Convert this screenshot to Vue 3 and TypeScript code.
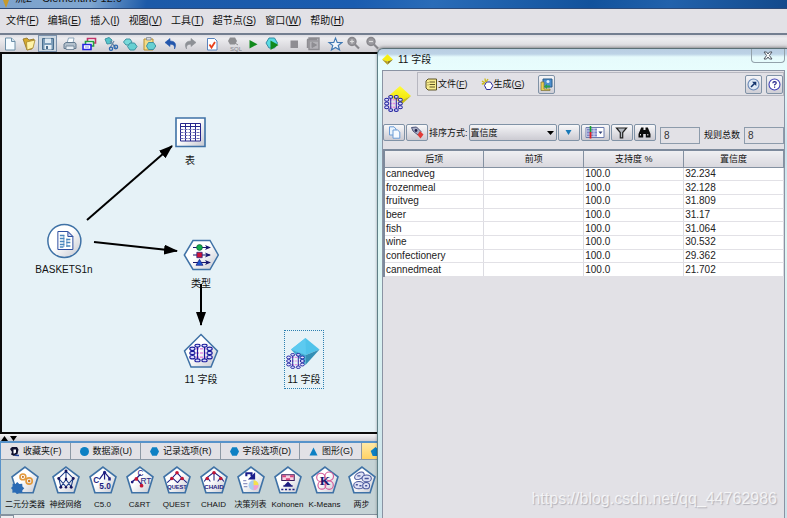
<script setup lang="ts">
import { ref } from 'vue'

interface MenuItem { label: string; key: string }
interface CanvasNode { id: string; label: string; icon: string; x: number; y: number; selected?: boolean }
interface Rule { consequent: string; antecedent: string; support: string; confidence: string }

const menus: MenuItem[] = [
  { label: '文件', key: 'F' },
  { label: '编辑', key: 'E' },
  { label: '插入', key: 'I' },
  { label: '视图', key: 'V' },
  { label: '工具', key: 'T' },
  { label: '超节点', key: 'S' },
  { label: '窗口', key: 'W' },
  { label: '帮助', key: 'H' },
]

const toolGroups: string[][] = [
  ['new', 'open', 'save'],
  ['print', 'styles'],
  ['cut', 'copy', 'paste'],
  ['undo', 'redo'],
  ['check'],
  ['sql', 'run', 'runsel'],
  ['stop', 'props'],
  ['star', 'zoomin', 'zoomout'],
]

const nodes: CanvasNode[] = [
  { id: 'table', label: '表', icon: 'n-table', x: 188, y: 60 },
  { id: 'source', label: 'BASKETS1n', icon: 'n-source', x: 62, y: 169 },
  { id: 'type', label: '类型', icon: 'n-type', x: 199, y: 183 },
  { id: 'model', label: '11 字段', icon: 'n-model', x: 199, y: 279 },
  { id: 'nugget', label: '11 字段', icon: 'n-nugget', x: 302, y: 279, selected: true },
]

const tabs = [
  { label: '收藏夹(F)', icon: 't-fav' },
  { label: '数据源(U)', icon: 't-circle' },
  { label: '记录选项(R)', icon: 't-hex' },
  { label: '字段选项(D)', icon: 't-hex' },
  { label: '图形(G)', icon: 't-tri' },
  { label: '建模(M)', icon: 't-pent' },
]
const activeTab = ref(5)

const palette = [
  { label: '二元分类器', icon: 'p-binary' },
  { label: '神经网络', icon: 'p-neural' },
  { label: 'C5.0', icon: 'p-c5' },
  { label: 'C&RT', icon: 'p-crt' },
  { label: 'QUEST', icon: 'p-quest' },
  { label: 'CHAID', icon: 'p-chaid' },
  { label: '决策列表', icon: 'p-list' },
  { label: 'Kohonen', icon: 'p-kohonen' },
  { label: 'K-Means', icon: 'p-kmeans' },
  { label: '两步', icon: 'p-twostep' },
]

const columns = ['后项', '前项', '支持度 %', '置信度']
const rules: Rule[] = [
  ['cannedveg', '32.234'],
  ['frozenmeal', '32.128'],
  ['fruitveg', '31.809'],
  ['beer', '31.17'],
  ['fish', '31.064'],
  ['wine', '30.532'],
  ['confectionery', '29.362'],
  ['cannedmeat', '21.702'],
].map(([consequent, confidence]) => ({ consequent, antecedent: '', support: '100.0', confidence }))

const sortBy = ref('置信度')
const shown = ref('8')
const total = ref('8')
</script>

<template>
  <div class="desktop">
    <svg class="defs" aria-hidden="true">
      <defs>
        <linearGradient id="g-face" x1="0" y1="0" x2="1" y2="1">
          <stop offset="0.45" stop-color="#ffffff" />
          <stop offset="1" stop-color="#c4c6cf" />
        </linearGradient>
        <linearGradient id="g-gem" x1="0" y1="0" x2="0" y2="1">
          <stop offset="0" stop-color="#fffb3a" />
          <stop offset="1" stop-color="#f0e400" />
        </linearGradient>
        <marker id="arrow" viewBox="0 0 14 10" refX="13" refY="5" markerWidth="14" markerHeight="10" markerUnits="userSpaceOnUse" orient="auto">
          <path d="M0 0 L14 5 L0 10 Z" fill="#000" />
        </marker>

        <symbol id="pent" viewBox="0 0 27 27">
          <path d="M13.5 1 L26 10.5 L21.3 25.8 H5.7 L1 10.5 Z" fill="url(#g-face)" stroke="#3f72a6" stroke-width="1.6" />
        </symbol>
        <symbol id="lattice" viewBox="0 0 24 18" preserveAspectRatio="none">
          <g fill="none" stroke="#e58fe0" stroke-width="1.4" stroke-dasharray="3 1">
            <path d="M7 5 H17 M7 9 H17 M7 13 H17" />
          </g>
          <g fill="#dfe0ff" stroke="#1c1c9c" stroke-width="1.1">
            <ellipse cx="8.5" cy="2" rx="2.6" ry="1.4" /><ellipse cx="15.5" cy="2" rx="2.6" ry="1.4" />
            <ellipse cx="8.5" cy="16" rx="2.6" ry="1.4" /><ellipse cx="15.5" cy="16" rx="2.6" ry="1.4" />
            <ellipse cx="3.4" cy="5" rx="2.6" ry="1.6" /><ellipse cx="20.6" cy="5" rx="2.6" ry="1.6" />
            <ellipse cx="3.4" cy="9" rx="2.6" ry="1.6" /><ellipse cx="20.6" cy="9" rx="2.6" ry="1.6" />
            <ellipse cx="3.4" cy="13" rx="2.6" ry="1.6" /><ellipse cx="20.6" cy="13" rx="2.6" ry="1.6" />
          </g>
          <path d="M8.5 3.4 V14.6 M15.5 3.4 V14.6" stroke="#1c1c9c" stroke-width="1.2" />
        </symbol>

        <!-- toolbar -->
        <symbol id="i-new" viewBox="0 0 16 16">
          <path d="M3.5 2 H9.5 L13 5.5 V14 H3.5 Z" fill="#f4fbff" stroke="#6c8fa8" />
          <path d="M9.5 2 V5.5 H13" fill="#d5e6ef" stroke="#6c8fa8" />
        </symbol>
        <symbol id="i-open" viewBox="0 0 16 16">
          <path d="M2 3 L6 2 L8 4 L13 3 L11 13 L6 14 Z" fill="#d6a92c" stroke="#8d7027" stroke-width="0.8" />
          <path d="M6 14 L5.5 6 L14 4 L12 12 Z" fill="#fff3a8" stroke="#a98a2c" stroke-width="0.8" />
        </symbol>
        <symbol id="i-save" viewBox="0 0 16 16">
          <path d="M2.5 2.5 H13.5 V13.5 H2.5 Z" fill="#7c9db9" stroke="#496d8d" />
          <path d="M5 2.5 H11 V7 H5 Z" fill="#dfeaf2" /><path d="M4.5 9 H11.5 V13.5 H4.5 Z" fill="#e8f0f5" />
          <path d="M6 10 H8 V13 H6 Z" fill="#496d8d" />
        </symbol>
        <symbol id="i-print" viewBox="0 0 16 16">
          <path d="M5 7 L6.5 2 H12 L11 7 Z" fill="#fafdff" stroke="#7a97b0" stroke-width="0.8" />
          <path d="M2 8 L4 6.5 H13 L14 8 V12.5 H2 Z" fill="#b3c1cd" stroke="#647b90" />
          <path d="M4 10 H12 V13.5 H4 Z" fill="#e8eef4" stroke="#647b90" stroke-width="0.8" />
        </symbol>
        <symbol id="i-styles" viewBox="0 0 16 16">
          <path d="M6.5 2.5 H14.5 V7 H6.5 Z" fill="#fff" stroke="#c0356a" stroke-width="1.6" />
          <path d="M4.5 5.5 H12.5 V10 H4.5 Z" fill="#fff" stroke="#23a043" stroke-width="1.6" />
          <path d="M2 8.5 H10 V13.5 H2 Z" fill="#fff" stroke="#2525e0" stroke-width="1.6" /><path d="M4 11 H8" stroke="#8b8bee" />
        </symbol>
        <symbol id="i-cut" viewBox="0 0 16 16">
          <path d="M2 3 L6 1.5 L9 4 L8 7.5 L4 8 Z" fill="#55c5cb" stroke="#3f93a2" />
          <path d="M7 5 L13 12 M11 5 L7 12" stroke="#6b8ba8" stroke-width="1.3" />
          <circle cx="12.8" cy="11" r="1.8" fill="none" stroke="#2d68b0" stroke-width="1.3" /><circle cx="8" cy="12.8" r="1.6" fill="none" stroke="#2d68b0" stroke-width="1.3" />
        </symbol>
        <symbol id="i-copy" viewBox="0 0 16 16">
          <path d="M1.5 6 L4 3 H8 L10 6 L8 9 H4 Z" fill="#79dada" stroke="#3f93a2" />
          <path d="M5.5 10.5 L8 7 H12.5 L15 10.5 L12.5 14 H8 Z" fill="#67d0d2" stroke="#3f93a2" />
        </symbol>
        <symbol id="i-paste" viewBox="0 0 16 16">
          <path d="M3 3 H12 V14 H3 Z" fill="#f4dc88" stroke="#b79032" /><path d="M5.5 1.5 H10 V4 H5.5 Z" fill="#d9dde2" stroke="#848b94" stroke-width="0.8" />
          <path d="M5.5 10 L7.5 6.5 H12.5 L14.8 10 L12.5 13.5 H7.5 Z" fill="#67d0d2" stroke="#3f93a2" />
        </symbol>
        <symbol id="i-undo" viewBox="0 0 16 16">
          <path d="M2 6.5 L7 2.5 V5 C12 5 14 8 11.5 13 C11.8 9 10 8.3 7 8.3 V10.5 Z" fill="#2457ac" stroke="#2457ac" stroke-width="0.6" />
        </symbol>
        <symbol id="i-redo" viewBox="0 0 16 16">
          <path d="M14 6.5 L9 2.5 V5 C4 5 2 8 4.5 13 C4.2 9 6 8.3 9 8.3 V10.5 Z" fill="#8d9095" stroke="#8d9095" stroke-width="0.6" />
        </symbol>
        <symbol id="i-check" viewBox="0 0 16 16">
          <path d="M3.5 2.5 H10.5 L13 5 V14 H3.5 Z" fill="#fff" stroke="#5a83bd" /><path d="M5.5 8.5 L7.5 11.5 L11 6" fill="none" stroke="#e8401c" stroke-width="1.8" />
        </symbol>
        <symbol id="i-sql" viewBox="0 0 16 16">
          <path d="M2 5 L4 1.5 H9 L11 5 L9 8.5 H4 Z" fill="#8e8e91" /><path d="M9 7 L12 9" stroke="#8e8e91" />
          <text x="4" y="15" font-size="6" font-family="Liberation Sans, sans-serif" fill="#85858a">SQL</text>
        </symbol>
        <symbol id="i-run" viewBox="0 0 16 16"><path d="M4.5 4 L12.5 8.3 L4.5 12.5 Z" fill="#118a1c" /></symbol>
        <symbol id="i-runsel" viewBox="0 0 16 16">
          <path d="M2 7 L5 2 H10.5 L13.5 7 L10.5 12 H5 Z" fill="#5adbe2" stroke="#368ba5" /><path d="M6.5 4.5 L14.5 9 L6.5 14 Z" fill="#118a1c" />
        </symbol>
        <symbol id="i-stop" viewBox="0 0 16 16"><path d="M4.5 4.5 H12 V12 H4.5 Z" fill="#8e8d92" /></symbol>
        <symbol id="i-props" viewBox="0 0 16 16">
          <path d="M2 3.5 H12 M4 2 H14 V13.5 H4 Z M2.5 3.5 V12" fill="#b3b2b7" stroke="#8e8d92" stroke-width="1.4" /><path d="M5 5 H13 M7 6.5 L11.5 9 L7 11.5 Z" stroke="#8e8d92" fill="#8e8d92" />
        </symbol>
        <symbol id="i-star" viewBox="0 0 16 16">
          <path d="M8.5 2 L10.2 6.4 L15 6.6 L11.2 9.5 L12.6 14 L8.5 11.5 L4.4 14 L5.8 9.5 L2 6.6 L6.8 6.4 Z" fill="#f1f7fc" stroke="#3e78b3" stroke-width="1.1" />
        </symbol>
        <symbol id="i-zoomin" viewBox="0 0 16 16">
          <circle cx="6" cy="5.5" r="4" fill="#9b9a9f" stroke="#88878c" stroke-width="1.4" /><path d="M4 5.5 H8 M6 3.5 V7.5" stroke="#ddd" stroke-width="1.2" /><path d="M9 8.5 L13 12.5" stroke="#88878c" stroke-width="2.2" />
        </symbol>
        <symbol id="i-zoomout" viewBox="0 0 16 16">
          <circle cx="6" cy="5.5" r="4" fill="#9b9a9f" stroke="#88878c" stroke-width="1.4" /><path d="M4 5.5 H8" stroke="#ddd" stroke-width="1.2" /><path d="M9 8.5 L13 12.5" stroke="#88878c" stroke-width="2.2" />
        </symbol>

        <!-- stream nodes -->
        <symbol id="n-table" viewBox="0 0 36 36">
          <path d="M4 4 H33 V32.5 H4 Z" fill="url(#g-face)" stroke="#3f72a6" stroke-width="1.6" />
          <path d="M8.5 9.5 H28.5 V27 H8.5 Z" fill="#fff" stroke="#26268c" stroke-width="1" />
          <path d="M8.5 12.5 H28.5 M13.5 9.5 V27 M18.5 9.5 V27 M23.5 9.5 V27" stroke="#26268c" stroke-width="1" />
          <path d="M8.5 15.5 H28 M8.5 18.5 H28 M8.5 21.5 H28 M8.5 24.5 H28" stroke="#6c6cb5" stroke-width="1" stroke-dasharray="3 1" />
        </symbol>
        <symbol id="n-source" viewBox="0 0 36 36">
          <circle cx="18" cy="18" r="16.5" fill="url(#g-face)" stroke="#3f72a6" stroke-width="1.5" />
          <path d="M11.5 8.5 H21.5 L26.5 13.5 V26.5 H11.5 Z" fill="#fff" stroke="#2f4fa0" /><path d="M21.5 8.5 V13.5 H26.5 Z" fill="#cfd7f2" stroke="#2f4fa0" />
          <path d="M13.5 12.5 H18 M13.5 15.5 H18 M13.5 18.5 H18 M13.5 21.5 H18 M13.5 24 H17 M20 16.5 H24 M20 19.5 H24 M20 23 H24" stroke="#4a86bd" stroke-width="1.3" />
          <path d="M17.5 12 V24 M20.5 15.5 V24" stroke="#4a86bd" stroke-width="0.8" />
        </symbol>
        <symbol id="n-type" viewBox="0 0 36 36">
          <path d="M10 3.5 H27 L35.3 18 L27 32.5 H10 L1.3 18 Z" fill="url(#g-face)" stroke="#3f72a6" stroke-width="1.5" />
          <path d="M10 10.5 H27 M10 18 H27 M10 25.5 H27" stroke="#17176e" stroke-width="1.2" />
          <path d="M22 8 L28 10.5 L22 13 L23.5 10.5 Z M22 15.5 L28 18 L22 20.5 L23.5 18 Z M22 23 L28 25.5 L22 28 L23.5 25.5 Z" fill="#17176e" />
          <circle cx="16.5" cy="10.5" r="2.9" fill="#12b04c" stroke="#14533a" stroke-width="0.7" />
          <path d="M13.8 15.3 H19.2 V20.7 H13.8 Z" fill="#cf1238" stroke="#1b1b7a" stroke-width="0.7" />
          <path d="M16.5 22.3 L20 28.3 H13 Z" fill="#1b55d0" stroke="#1b1b7a" stroke-width="0.7" />
        </symbol>
        <symbol id="n-model" viewBox="0 0 36 36">
          <path d="M18 1.5 L34.5 18 L28 34 H8 L1.5 18 Z" fill="url(#g-face)" stroke="#3f72a6" stroke-width="1.5" />
          <use href="#lattice" x="6" y="10.5" width="24" height="19" />
        </symbol>
        <symbol id="n-nugget" viewBox="0 0 36 36">
          <path d="M19.5 5 L33.5 16.5 L20 22 L5 16.5 Z" fill="#4fc3ea" /><path d="M19.5 5 L20 22 L5 16.5 Z" fill="#5ccaf0" />
          <path d="M5 16.5 L20 22 L19.5 32 Z" fill="#3fa8d0" /><path d="M33.5 16.5 L20 22 L19.5 32 Z" fill="#348fb5" />
          <use href="#lattice" x="0" y="20" width="19" height="16" />
        </symbol>

        <!-- palette tabs -->
        <symbol id="t-fav" viewBox="0 0 11 11">
          <path d="M1 3 L3 1 H8 L9.5 3.5 L8.5 8 L5 10 L2 8.5 L3 6 Z" fill="#10102e" /><path d="M4.5 3.5 H7 V6.5 L5.5 7.5 H4.5 Z" fill="#fff" /><path d="M6 9.3 L10 9.5" stroke="#1f3f94" stroke-width="1.5" />
        </symbol>
        <symbol id="t-circle" viewBox="0 0 11 11"><circle cx="5.5" cy="5.5" r="4.5" fill="#0d80c4" /></symbol>
        <symbol id="t-hex" viewBox="0 0 11 11"><path d="M3.2 1.3 H7.8 L10 5.5 L7.8 9.7 H3.2 L1 5.5 Z" fill="#0d80c4" /></symbol>
        <symbol id="t-tri" viewBox="0 0 11 11"><path d="M5.5 1.5 L9.5 9.5 H1.5 Z" fill="#0d80c4" /></symbol>
        <symbol id="t-pent" viewBox="0 0 11 11"><path d="M5.5 1 L10.3 5 L8.3 10 H2.7 L0.7 5 Z" fill="#0d80c4" /></symbol>

        <!-- palette nodes -->
        <symbol id="p-binary" viewBox="0 0 27 27">
          <use href="#pent" width="27" height="27" />
          <g fill="none" stroke="#e39a3c" stroke-width="1.6"><circle cx="11.5" cy="10.5" r="2.8" /><circle cx="17.5" cy="14.5" r="3" /></g>
          <circle cx="11.5" cy="10.5" r="1" fill="#c7782a" /><circle cx="17.5" cy="14.5" r="1.2" fill="#c7782a" />
          <path d="M6 15.5 L8 17.3 L10.8 17 L11 19.7 L12.8 21.5 L11 23.3 L10.8 26 L8 25.7 L6 27 L4 25.5 L1.3 25.8 L1.4 23 L0 21.3 L1.5 19.7 L1.5 17 L4.2 17.3 Z" fill="#2a6bb5" />
        </symbol>
        <symbol id="p-neural" viewBox="0 0 27 27">
          <use href="#pent" width="27" height="27" />
          <path d="M13.5 5 L6.5 12 L8.5 20 M13.5 5 L20.5 12 L18.5 20 M13.5 5 V13 M6.5 12 L13.5 20 L20.5 12 M13.5 13 L8.5 20 M13.5 13 L18.5 20" fill="none" stroke="#1d3f88" stroke-width="1" />
          <g fill="#15155f"><circle cx="13.5" cy="4.8" r="1.4" /><circle cx="6.5" cy="12" r="1.4" /><circle cx="20.5" cy="12" r="1.4" /><circle cx="13.5" cy="12.5" r="1.2" /><circle cx="8.5" cy="20.5" r="1.4" /><circle cx="18.5" cy="20.5" r="1.4" /><circle cx="13.5" cy="20.5" r="1.2" /></g>
        </symbol>
        <symbol id="p-c5" viewBox="0 0 27 27">
          <use href="#pent" width="27" height="27" />
          <path d="M10 13 L15 6 L20 12 M15 6 V13" fill="none" stroke="#1d1d80" stroke-width="1.2" /><circle cx="15" cy="6" r="1.5" fill="#1d1d80" /><path d="M18.5 11 H21 V14 H18.5 Z" fill="#1d1d80" />
          <text x="4" y="16" font-size="8" font-weight="bold" font-family="Liberation Sans, sans-serif" fill="#1d1d80">C</text><text x="10" y="22.5" font-size="8" font-weight="bold" font-family="Liberation Sans, sans-serif" fill="#1d1d80">5.0</text>
        </symbol>
        <symbol id="p-crt" viewBox="0 0 27 27">
          <use href="#pent" width="27" height="27" />
          <path d="M5 16 L10 12 L15 18 M10 12 L14 8" fill="none" stroke="#1d1d80" stroke-width="1.2" /><circle cx="10" cy="12.5" r="1.8" fill="#c41636" /><circle cx="15" cy="19" r="1.8" fill="#c41636" /><circle cx="6" cy="15.5" r="1.3" fill="#1d1d80" />
          <text x="11" y="10" font-size="8" font-family="Liberation Sans, sans-serif" fill="#1d1d80">C</text><text x="14" y="17" font-size="8" font-family="Liberation Sans, sans-serif" fill="#1d1d80">RT</text>
        </symbol>
        <symbol id="p-quest" viewBox="0 0 27 27">
          <use href="#pent" width="27" height="27" />
          <path d="M4 16 L9 11.5 L14 16 M9 11.5 L13.5 6.5 L18 11.5 M14 16 L18 11.5 L23 16" fill="none" stroke="#1d1d80" /><g fill="#c41636"><circle cx="13.5" cy="6.5" r="1.7" /><circle cx="8.5" cy="12" r="1.7" /><circle cx="18.5" cy="12" r="1.7" /></g>
          <text x="13.5" y="22" font-size="5.5" font-weight="bold" text-anchor="middle" font-family="Liberation Sans, sans-serif" fill="#1d1d80">QUEST</text>
        </symbol>
        <symbol id="p-chaid" viewBox="0 0 27 27">
          <use href="#pent" width="27" height="27" />
          <path d="M4 15 L7 11 L10 15 M7 11 L13.5 6 L20 11 M13.5 6 V14 M17 15 L20 11 L23 15" fill="none" stroke="#1d1d80" /><g fill="#c41636"><circle cx="13.5" cy="6.5" r="1.7" /><circle cx="7" cy="12" r="1.7" /><circle cx="20" cy="12" r="1.7" /></g>
          <text x="13.5" y="22" font-size="6" font-weight="bold" text-anchor="middle" font-family="Liberation Sans, sans-serif" fill="#1d1d80">CHAID</text>
        </symbol>
        <symbol id="p-list" viewBox="0 0 27 27">
          <use href="#pent" width="27" height="27" />
          <path d="M9 10 V7 H14 V10" fill="none" stroke="#1b1f8c" stroke-width="2" /><path d="M17.5 6 V13 H10.5 Z" fill="#1b1f8c" />
          <circle cx="16" cy="18.5" r="4.8" fill="#a9cdf0" /><path d="M16 18.5 V13.7 A4.8 4.8 0 0 1 20.8 18.5 Z" fill="#f7e04c" /><path d="M16 18.5 H20.8 A4.8 4.8 0 0 1 16 23.3 Z" fill="#f2a0cf" />
          <path d="M6 14 H9 M6 17 H10 M6.5 20 H10" stroke="#9096c4" stroke-width="1.2" />
        </symbol>
        <symbol id="p-kohonen" viewBox="0 0 27 27">
          <use href="#pent" width="27" height="27" />
          <path d="M7.5 8.5 H19.5 V14 H7.5 Z" fill="#f9d3e3" stroke="#3a1c5c" /><path d="M8 9.8 H11.5 M15.5 9.8 H19 M11.5 12.7 H15.5" stroke="#d8447e" stroke-width="2" />
          <path d="M13.5 15 L17 18.5 H10 Z M9 18.5 H18 V20 H9 Z" fill="#1d1d80" /><path d="M7 22.7 H20" stroke="#1d1d80" stroke-width="1.6" stroke-dasharray="2 1.6" />
        </symbol>
        <symbol id="p-kmeans" viewBox="0 0 27 27">
          <use href="#pent" width="27" height="27" />
          <g fill="none" stroke="#d65b9a" stroke-width="1.1"><circle cx="9.5" cy="11" r="4" /><circle cx="17.5" cy="10" r="4.2" /><circle cx="10.5" cy="18.5" r="3.8" /><circle cx="17.5" cy="18.5" r="4" /></g>
          <text x="8.5" y="18" font-size="13" font-weight="bold" font-family="Liberation Serif, serif" fill="#17176e">K</text>
        </symbol>
        <symbol id="p-twostep" viewBox="0 0 27 27">
          <use href="#pent" width="27" height="27" />
          <g fill="#dfe2f5" stroke="#47559c" stroke-width="1"><ellipse cx="11" cy="9.5" rx="5" ry="3" transform="rotate(-30 11 9.5)" /><ellipse cx="18" cy="12" rx="4.5" ry="3.3" /><ellipse cx="10.5" cy="18.5" rx="5" ry="3.5" /><ellipse cx="17.5" cy="19" rx="3.3" ry="3" /></g>
          <path d="M9 9.5 H12 M16 12 H20 M7.5 18 H9.5 M11 19 H13 M16.5 19 H18.5" stroke="#47559c" stroke-width="1.4" />
        </symbol>

        <!-- dialog -->
        <symbol id="d-gem" viewBox="0 0 11 11">
          <path d="M5.5 0.3 L10.9 5.5 L5.5 7.5 L0.1 5.5 Z" fill="#f7ee10" /><path d="M0.1 5.5 L5.5 7.5 V10.8 Z" fill="#b99f18" /><path d="M10.9 5.5 L5.5 7.5 V10.8 Z" fill="#8f7a12" />
        </symbol>
        <symbol id="d-model" viewBox="0 0 28 28">
          <path d="M16 1 L27 11 L14.5 16.5 L4.5 11 Z" fill="url(#g-gem)" /><path d="M27 11 L14.5 16.5 L17 20 Z" fill="#c9bf10" />
          <use href="#lattice" x="0" y="10" width="19" height="17" />
        </symbol>
        <symbol id="d-file" viewBox="0 0 13 13">
          <path d="M3 1 H11.5 V12 H3 L1 10 V3 Z" fill="#f8ec8e" stroke="#5e5426" /><path d="M4.5 4 H10 M4.5 6.5 H10 M4.5 9 H10 M3 4 V4.8 M3 6.5 V7.3" stroke="#5e5426" />
        </symbol>
        <symbol id="d-gen" viewBox="0 0 13 13">
          <path d="M3.5 7.5 L5.5 4 H9.5 L11.8 7.7 L9.5 11.5 H5.5 Z" fill="#fff" stroke="#2b2b9e" /><path d="M1 3 L4 5 M4 0.5 L4.5 4 M0.8 6 L3.5 5.5 M7 1 L5 4" stroke="#c9b715" stroke-width="1.3" />
        </symbol>
        <symbol id="d-pic" viewBox="0 0 13 13">
          <path d="M3 1 H12 V9 H3 Z" fill="#4c8fd0" stroke="#2b5c88" /><path d="M1 4 H4 V11 H10 V12.5 H1 Z" fill="#e9cf53" stroke="#7b7038" stroke-width="0.7" /><path d="M4 8.5 L7 6 V7.5 H10 V9.5 H7 V11 Z" fill="#2aa04b" /><circle cx="8" cy="3.5" r="1.5" fill="#e5f2fa" />
        </symbol>
        <symbol id="d-max" viewBox="0 0 13 13">
          <circle cx="6.5" cy="6.5" r="5.5" fill="#dfe9f5" stroke="#6886b5" stroke-width="1.1" /><path d="M4 9 L7.5 5.5" stroke="#15356d" stroke-width="1.6" /><path d="M5 3.7 H9.3 V8 Z" fill="#15356d" />
        </symbol>
        <symbol id="d-help" viewBox="0 0 13 13">
          <circle cx="6.5" cy="6.5" r="5.5" fill="#fff" stroke="#3f3fb4" stroke-width="1.1" /><path d="M4.8 5.2 Q4.9 3.6 6.6 3.6 Q8.3 3.7 8.2 5.1 Q8 6 6.6 6.8 V7.6 M6.6 8.6 V9.8" fill="none" stroke="#26268c" stroke-width="1.2" />
        </symbol>
        <symbol id="d-copy" viewBox="0 0 13 13">
          <path d="M1.5 0.8 H6 L8 3 V9 H1.5 Z" fill="#eaf3fc" stroke="#6a9bd6" /><path d="M5 4 H9.5 L11.8 6 V12.2 H5 Z" fill="#f6faff" stroke="#6a9bd6" />
        </symbol>
        <symbol id="d-tag" viewBox="0 0 13 13">
          <path d="M0.5 1.5 L5.5 1 L10 5.5 L7 9 L2 5 Z" fill="#a8aec6" stroke="#4e5478" /><path d="M9 5 L12.5 8.5 L9.5 12.5 L6.5 9 Z" fill="#e13a35" /><circle cx="5" cy="4.5" r="1.4" fill="#23234a" />
        </symbol>
        <symbol id="d-down" viewBox="0 0 13 13"><path d="M3.5 4 H9.5 L6.5 9 Z" fill="#1879b8" /></symbol>
        <symbol id="d-cols" viewBox="0 0 20 13">
          <path d="M1 1.5 H19 V11.5 H1 Z" fill="#fff" stroke="#6c7cae" /><path d="M2 2.5 H12 V10.5 H2 Z" fill="#7f86c8" /><path d="M2 5 H12 M2 8 H12 M9 2 V11" stroke="#dfe2f5" stroke-width="0.8" /><path d="M5.5 0 V6" stroke="#16a22e" stroke-width="1.6" /><path d="M5.5 6 V12.5" stroke="#e02020" stroke-width="1.8" /><path d="M13.5 5.5 H17.5 L15.5 8 Z" fill="#2c3d78" />
        </symbol>
        <symbol id="d-filter" viewBox="0 0 13 13"><path d="M1.5 2 H11.5 L7.7 6.5 V11.8 H5.3 V6.5 Z" fill="#b5bac2" stroke="#222" stroke-width="1.2" /></symbol>
        <symbol id="d-find" viewBox="0 0 13 13"><path d="M3.2 1.5 H5.5 V4 H7.5 V1.5 H9.8 L12.5 8 V11.5 H7.8 V8 H5.2 V11.5 H0.5 V8 Z" fill="#0c0c0c" /><path d="M2.5 8 V9.5 M9.8 8 V9.5" stroke="#fff" stroke-width="0.9" /></symbol>
      </defs>
    </svg>

    <main class="app">
      <header class="titlebar"><span class="app-logo"></span><span>流2 - Clementine 12.0</span></header>

      <nav class="menubar">
        <button v-for="m in menus" :key="m.key" type="button" class="menu">{{ m.label }}(<u>{{ m.key }}</u>)</button>
      </nav>

      <div class="toolbar">
        <div v-for="(group, g) in toolGroups" :key="g" class="tool-group">
          <button v-for="t in group" :key="t" type="button" class="tool" :class="{ pressed: t === 'save' }" :aria-label="t">
            <svg><use :href="'#i-' + t" /></svg>
          </button>
        </div>
      </div>

      <section class="canvas">
        <svg class="edges">
          <g stroke="#000" stroke-width="2">
            <line x1="85" y1="166" x2="170" y2="92" marker-end="url(#arrow)" />
            <line x1="92" y1="188" x2="175" y2="197" marker-end="url(#arrow)" />
            <line x1="199" y1="230" x2="199" y2="271" marker-end="url(#arrow)" />
          </g>
        </svg>
        <div v-for="n in nodes" :key="n.id" class="node" :class="{ selected: n.selected }" :style="{ left: n.x + 'px', top: n.y + 'px' }">
          <svg><use :href="'#' + n.icon" /></svg>
          <span>{{ n.label }}</span>
        </div>
      </section>

      <div class="sash">
        <svg viewBox="0 0 16 5"><path d="M0 5 L3.5 0 L7 5 Z M9 0 H16 L12.5 5 Z" fill="#000" /></svg>
      </div>

      <div class="tabs" role="tablist">
        <button v-for="(t, i) in tabs" :key="t.label" type="button" role="tab" class="tab" :class="{ active: i === activeTab }" :aria-selected="i === activeTab" @click="activeTab = i">
          <svg><use :href="'#' + t.icon" /></svg>{{ t.label }}
        </button>
      </div>

      <div class="palette">
        <button v-for="p in palette" :key="p.label" type="button" class="palette-node">
          <svg><use :href="'#' + p.icon" /></svg>
          <span>{{ p.label }}</span>
        </button>
      </div>
      <div class="scroll-strip"><span></span></div>
    </main>

    <section class="dialog" role="dialog" aria-labelledby="dialog-title">
      <header class="dialog-title">
        <svg><use href="#d-gem" /></svg>
        <h1 id="dialog-title">11 字段</h1>
        <button type="button" class="close" aria-label="关闭">
          <svg viewBox="0 0 10 9"><path d="M1 1 H3.5 L5 3 L6.5 1 H9 L6.4 4.5 L9 8 H6.5 L5 6 L3.5 8 H1 L3.6 4.5 Z" fill="#fff" stroke="#4d5560" stroke-width="1" /></svg>
        </button>
      </header>

      <div class="dialog-body">
        <div class="dialog-head">
          <svg class="model-icon"><use href="#d-model" /></svg>
          <div class="head-bar">
            <button type="button" class="flat"><svg><use href="#d-file" /></svg>文件(<u>F</u>)</button>
            <button type="button" class="flat"><svg><use href="#d-gen" /></svg>生成(<u>G</u>)</button>
            <button type="button" class="boxed" aria-label="预览"><svg><use href="#d-pic" /></svg></button>
            <span class="spacer"></span>
            <button type="button" class="boxed" aria-label="最大化"><svg><use href="#d-max" /></svg></button>
            <button type="button" class="boxed" aria-label="帮助"><svg><use href="#d-help" /></svg></button>
          </div>
        </div>

        <div class="controls">
          <button type="button" class="ctl" aria-label="复制"><svg><use href="#d-copy" /></svg></button>
          <button type="button" class="ctl" aria-label="标记"><svg><use href="#d-tag" /></svg></button>
          <label for="sort">排序方式:</label>
          <span class="select-wrap">
            <select id="sort" v-model="sortBy"><option>置信度</option></select>
            <svg viewBox="0 0 7 4"><path d="M0 0 H7 L3.5 4 Z" fill="#000" /></svg>
          </span>
          <button type="button" class="ctl" aria-label="降序"><svg><use href="#d-down" /></svg></button>
          <button type="button" class="ctl wide" aria-label="列"><svg><use href="#d-cols" /></svg></button>
          <button type="button" class="ctl" aria-label="过滤"><svg><use href="#d-filter" /></svg></button>
          <button type="button" class="ctl" aria-label="查找"><svg><use href="#d-find" /></svg></button>
          <input v-model="shown" class="count" aria-label="规则数" readonly />
          <label for="total" class="total-label">规则总数</label>
          <input id="total" v-model="total" class="count" readonly />
        </div>

        <table class="rules">
          <thead>
            <tr><th v-for="c in columns" :key="c" scope="col">{{ c }}</th></tr>
          </thead>
          <tbody>
            <tr v-for="r in rules" :key="r.consequent">
              <td>{{ r.consequent }}</td>
              <td>{{ r.antecedent }}</td>
              <td>{{ r.support }}</td>
              <td>{{ r.confidence }}</td>
            </tr>
          </tbody>
        </table>

        <p class="watermark">https://blog.csdn.net/qq_44762986</p>
      </div>
    </section>
  </div>
</template>

<style>
body {
  margin: 0;
  overflow: hidden;
}
</style>

<style scoped>
.desktop {
  position: relative;
  height: 100vh;
  overflow: hidden;
  font: 10px/12px "Liberation Sans", "Noto Sans CJK SC", sans-serif;
  color: #111;
}
.desktop * {
  box-sizing: border-box;
}
.defs {
  position: absolute;
  width: 0;
  height: 0;
}
svg {
  display: block;
  flex: none;
}
button {
  margin: 0;
  padding: 0;
  border: 0;
  background: none;
  font: inherit;
  color: inherit;
  white-space: nowrap;
}
.app {
  display: flex;
  flex-direction: column;
  height: 100%;
  background: #e2e1e6;
}

.titlebar {
  display: flex;
  align-items: flex-end;
  gap: 6px;
  height: 9px;
  flex: none;
  padding-left: 3px;
  overflow: hidden;
  border-bottom: 1px solid #2c4a78;
  background: linear-gradient(100deg, #7da2cc 0, #7fa6d0 90px, #1c5aa8 145px, #1a5cb0 45%, #2a6cb8 55%, #12529c 75%, #2262ac 85%, #134a8c 100%);
  font-size: 11px;
  line-height: 20px;
}
.app-logo {
  width: 6px;
  height: 8px;
  background: #c69a2c;
  clip-path: polygon(0 0, 100% 0, 50% 100%);
}

.menubar {
  display: flex;
  align-items: center;
  gap: 9px;
  height: 26px;
  flex: none;
  padding: 0 6px;
  border-bottom: 2px solid #737e90;
}

.toolbar {
  display: flex;
  gap: 3px;
  height: 17px;
  flex: none;
  background: linear-gradient(#dcdce2, #ededf0 20%, #cfced3);
}
.tool-group {
  display: flex;
}
.tool {
  width: 19px;
  height: 17px;
  display: grid;
  place-items: center;
}
.tool svg {
  width: 16px;
  height: 16px;
}
.tool.pressed {
  border: 1px solid #7d93ad;
  background: #cdd8e2;
}

.canvas {
  position: relative;
  flex: 1;
  min-height: 0;
  overflow: hidden;
  border: 2px solid #0a0a0a;
  background: #e6f2f7;
}
.edges {
  position: absolute;
  inset: 0;
  width: 100%;
  height: 100%;
}
.node {
  position: absolute;
  display: flex;
  flex-direction: column;
  align-items: center;
  gap: 5px;
  transform: translateX(-50%);
  white-space: nowrap;
}
.node svg {
  width: 36px;
  height: 36px;
}
.node.selected::before {
  content: "";
  position: absolute;
  inset: -3px -2px;
  border: 1px dotted #2b7fb0;
}

.sash {
  height: 7px;
  flex: none;
  padding: 2px 0 0 1px;
  background: linear-gradient(#f4f4f6, #cfced4);
}
.sash svg {
  width: 16px;
  height: 5px;
}

.tabs {
  display: flex;
  flex: none;
  height: 19px;
  border-top: 2px solid #5792ca;
  border-left: 1px solid #5792ca;
  border-bottom: 1px solid #8b98a6;
  font-size: 9px;
}
.tab {
  display: flex;
  align-items: center;
  gap: 3px;
  padding: 0 8px;
  border-right: 1px solid #8d98a4;
}
.tab svg {
  width: 11px;
  height: 11px;
}
.tab.active {
  background: linear-gradient(#ffe9a6, #ffd264);
}

.palette {
  display: flex;
  flex: none;
  height: 54px;
  padding: 6px 0 0 2px;
  overflow: hidden;
  border-left: 1px solid #5792ca;
  background: #c5d3d6;
  font-size: 8px;
}
.palette-node {
  flex: none;
  width: 37px;
  display: flex;
  flex-direction: column;
  align-items: center;
  gap: 5px;
}
.palette-node:first-child {
  width: 44px;
}
.palette-node svg {
  width: 28px;
  height: 28px;
}
.scroll-strip {
  flex: none;
  height: 4px;
  border-top: 1px solid #8693a0;
  background: #eeeef1;
}
.scroll-strip span {
  display: block;
  width: 14px;
  height: 3px;
  border: 1px solid #8693a0;
  border-bottom: 0;
}

.dialog {
  position: absolute;
  left: 377px;
  top: 48px;
  right: 0;
  bottom: 0;
  display: flex;
  flex-direction: column;
  padding: 0 2px 0 4px;
  border-top: 1px solid #5b7076;
  border-left: 1px solid #5f7f86;
  border-radius: 6px 0 0 0;
  background: linear-gradient(#b9cee2 0, #bdd3e6 5px, #e6fbfc 8px, #e8fdfd 22px, #c9e4ee 100px, #dff8f5 190px, #cbe2ea 100%);
  box-shadow: 0 -1px 3px rgb(0 0 0 / 35%);
}
.dialog-title {
  display: flex;
  align-items: center;
  gap: 5px;
  flex: none;
  height: 21px;
}
.dialog-title > svg {
  width: 11px;
  height: 11px;
}
.dialog-title h1 {
  flex: 1;
  margin: 0;
  font-size: 10px;
  font-weight: normal;
}
.close {
  align-self: flex-start;
  display: grid;
  place-items: center;
  width: 34px;
  height: 14px;
  border: 1px solid #93a2ab;
  border-top: 0;
  border-radius: 0 0 4px 4px;
}
.close svg {
  width: 10px;
  height: 9px;
}

.dialog-body {
  display: flex;
  flex: 1;
  flex-direction: column;
  min-height: 0;
  border: 1px solid #8a93a3;
  border-bottom: 0;
  background: #e2e1e6;
}
.dialog-head {
  display: flex;
  gap: 5px;
  padding: 1px 0 0 1px;
  height: 53px;
  flex: none;
}
.model-icon {
  width: 28px;
  height: 28px;
  margin-top: 13px;
}
.head-bar {
  flex: 1;
  display: flex;
  align-items: center;
  gap: 4px;
  height: 24px;
  padding-left: 7px;
  border: 1px solid #b7b7c0;
  font-size: 9px;
}
.flat {
  display: flex;
  align-items: center;
  margin-right: 9px;
}
.head-bar svg {
  width: 13px;
  height: 13px;
}
.boxed {
  display: grid;
  place-items: center;
  width: 17px;
  height: 19px;
  border: 1px solid #8092a6;
  border-radius: 2px;
  background: linear-gradient(#f5f5f8, #cfced5);
}
.spacer {
  flex: 1;
}

.controls {
  display: flex;
  align-items: center;
  gap: 1px;
  flex: none;
  height: 17px;
}
.ctl {
  display: grid;
  place-items: center;
  flex: none;
  width: 22px;
  height: 17px;
  border: 1px solid #8092a6;
  border-radius: 2px;
  background: linear-gradient(#f8f8fa, #cbcad1);
}
.ctl svg {
  width: 13px;
  height: 13px;
}
.ctl.wide {
  width: 29px;
}
.ctl.wide svg {
  width: 20px;
}
.controls label {
  flex: none;
  font-size: 9px;
}
.controls .total-label {
  margin: 5px 3px 0;
}
.select-wrap {
  position: relative;
  flex: 1;
}
.select-wrap select {
  display: block;
  width: 100%;
  height: 17px;
  padding: 0 1px;
  appearance: none;
  border: 1px solid #8092a6;
  border-radius: 2px;
  background: linear-gradient(#f4f4f7, #cccbd2);
  font: inherit;
  font-size: 9px;
  color: inherit;
}
.select-wrap svg {
  position: absolute;
  right: 3px;
  top: 7px;
  width: 7px;
  height: 4px;
  pointer-events: none;
}
.count {
  flex: none;
  width: 40px;
  height: 17px;
  margin: 5px 0 0 3px;
  padding: 0 3px;
  border: 1px solid #8d9bab;
  background: #e2e1e6;
  font: inherit;
  color: #333;
}
.total-label + .count {
  margin-left: 0;
}

.rules {
  width: 100%;
  height: 128px;
  margin-top: 8px;
  flex: none;
  table-layout: fixed;
  border-collapse: collapse;
  border-top: 2px solid #7d8a9c;
  border-left: 2px solid #7d8a9c;
}
.rules th {
  height: 17px;
  padding: 0;
  border-right: 1px solid #8491a1;
  border-bottom: 1px solid #8491a1;
  background: linear-gradient(#efeff2, #d9d8de);
  font-size: 9px;
  font-weight: normal;
}
.rules td {
  padding: 0 1px;
  border-right: 1px solid #dcdce2;
  border-bottom: 1px solid #e2e1e6;
  background: #fff;
  color: #222;
}
.watermark {
  margin: auto 7px 9px 0;
  font-size: 16px;
  line-height: 20px;
  text-align: right;
  color: rgb(255 255 255 / 75%);
  text-shadow: 1px 1px 1px rgb(120 120 130 / 45%);
}
</style>
